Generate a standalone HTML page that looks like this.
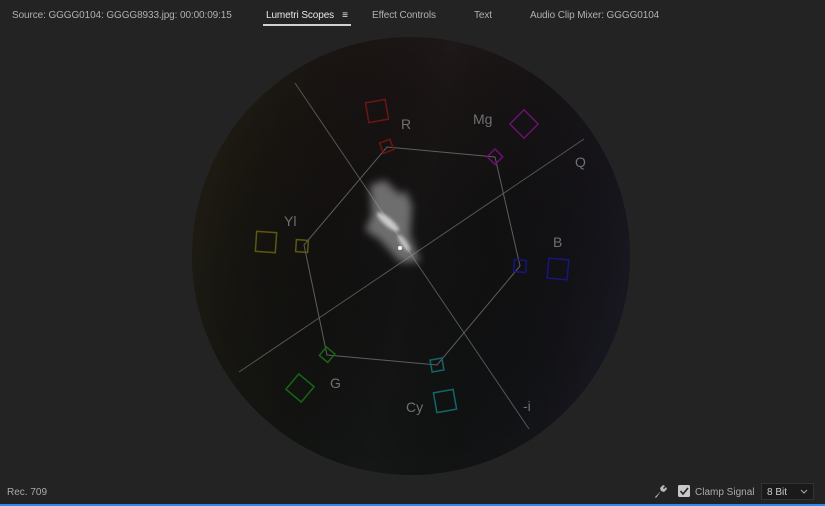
<!DOCTYPE html>
<html><head><meta charset="utf-8"><style>
html,body{margin:0;padding:0;width:825px;height:506px;background:#232323;overflow:hidden;font-family:"Liberation Sans",sans-serif;}
.top{position:absolute;left:0;top:0;width:825px;height:30px;font-size:10px;color:#b0b0b0;}
.top span{position:absolute;top:10px;white-space:nowrap;letter-spacing:-0.1px}
.ul{position:absolute;left:263px;top:24px;width:88px;height:2px;background:#d0d0d0}
.bot{position:absolute;top:487px;font-size:10px;color:#aaa;white-space:nowrap}
.blue{position:absolute;left:0;top:504px;width:825px;height:2px;background:#2d8ceb}
</style></head><body>
<div class="top">
<span style="left:12px">Source: GGGG0104: GGGG8933.jpg: 00:00:09:15</span>
<span style="left:266px;color:#e8e8e8">Lumetri Scopes &nbsp;&nbsp;≡</span>
<span style="left:372px">Effect Controls</span>
<span style="left:474px">Text</span>
<span style="left:530px">Audio Clip Mixer: GGGG0104</span>
</div>
<div class="ul"></div>
<svg width="825" height="506" style="position:absolute;left:0;top:0">
<defs>
<linearGradient id="h1" x1="0.3" y1="0" x2="0.7" y2="1">
<stop offset="0" stop-color="#211818"/><stop offset="0.5" stop-color="#171616"/><stop offset="1" stop-color="#131715"/>
</linearGradient>
<linearGradient id="h2" x1="0" y1="0.4" x2="1" y2="0.6">
<stop offset="0" stop-color="#1e1d10" stop-opacity="0.7"/><stop offset="0.5" stop-color="#000" stop-opacity="0"/><stop offset="1" stop-color="#1a1826" stop-opacity="0.7"/>
</linearGradient>
<radialGradient id="dk" cx="411" cy="256" r="219" gradientUnits="userSpaceOnUse">
<stop offset="0" stop-color="#0f0f0f" stop-opacity="0.4"/><stop offset="1" stop-color="#000" stop-opacity="0"/>
</radialGradient>
<filter id="bl"><feGaussianBlur stdDeviation="4"/></filter>
<filter id="bl2"><feGaussianBlur stdDeviation="1.5"/></filter>
</defs>
<circle cx="411" cy="256" r="219" fill="url(#h1)"/>
<circle cx="411" cy="256" r="219" fill="url(#h2)"/>
<circle cx="411" cy="256" r="219" fill="url(#dk)"/>
<g stroke="#555" stroke-width="1" fill="none">
<line x1="239" y1="372" x2="584" y2="139"/>
<line x1="295" y1="83" x2="529" y2="429"/>
<polygon points="387,147 495,157 520,266 437,365 327,355 304,245" stroke="#5e5e5e"/>
</g>
<g filter="url(#bl)" fill="#aaa">
<path d="M370 185 L385 180 L400 195 L405 190 L412 205 L410 235 L420 262 L400 262 L380 240 L365 230 L372 215 Z" opacity="0.6"/>
</g>
<g filter="url(#bl2)" fill="#ddd">
<ellipse cx="388" cy="222" rx="14" ry="4" transform="rotate(40 388 222)" opacity="0.8"/>
<ellipse cx="404" cy="243" rx="10" ry="3" transform="rotate(55 404 243)" opacity="0.7"/>
</g>
<circle cx="400" cy="248" r="2" fill="#fff"/>
<g fill="none" stroke-width="1.5">
<rect x="367" y="101" width="20" height="20" stroke="#6e1414" transform="rotate(-10 377 111)"/>
<rect x="381" y="141" width="11" height="11" stroke="#6e1414" transform="rotate(-20 386 146)"/>
<rect x="514" y="114" width="20" height="20" stroke="#6a1070" transform="rotate(45 524 124)"/>
<rect x="490" y="151" width="11" height="11" stroke="#6a1070" transform="rotate(45 495 156)"/>
<rect x="548" y="259" width="20" height="20" stroke="#16167e" transform="rotate(5 558 269)"/>
<rect x="514" y="260" width="12" height="12" stroke="#16167e" transform="rotate(5 520 266)"/>
<rect x="256" y="232" width="20" height="20" stroke="#5a5a0e" transform="rotate(4 266 242)"/>
<rect x="296" y="240" width="12" height="12" stroke="#5a5a0e" transform="rotate(4 302 246)"/>
<rect x="290" y="378" width="20" height="20" stroke="#156615" transform="rotate(40 300 388)"/>
<rect x="322" y="349" width="11" height="11" stroke="#156615" transform="rotate(40 327 354)"/>
<rect x="435" y="391" width="20" height="20" stroke="#126666" transform="rotate(-10 445 401)"/>
<rect x="431" y="359" width="12" height="12" stroke="#126666" transform="rotate(-10 437 365)"/>
</g>
<g fill="#707070" font-family="Liberation Sans,sans-serif" font-size="14">
<text x="401" y="129">R</text><text x="473" y="124">Mg</text><text x="575" y="167">Q</text>
<text x="553" y="247">B</text><text x="284" y="226">Yl</text><text x="330" y="388">G</text>
<text x="406" y="412">Cy</text><text x="523" y="411">-i</text>
</g>
<g transform="translate(654,485)" fill="#bbb"><path d="M1 12 L7 6 L6 3 L9 0 L11 1 L9 3 L10 4 L12 2 L13 4 L10 7 L7 6 L2 13 Z"/></g>
<rect x="678" y="485" width="12" height="12" rx="1.5" fill="#c8c8c8"/>
<path d="M680.5 491 L683 494 L688 488" stroke="#232323" stroke-width="1.6" fill="none"/>
<rect x="761.5" y="483.5" width="52" height="16" fill="#1a1a1a" stroke="#333"/>
<path d="M801 490 L804 493 L807 490" stroke="#aaa" fill="none"/>
</svg>
<div class="bot" style="left:7px">Rec. 709</div>
<div class="bot" style="left:695px">Clamp Signal</div>
<div class="bot" style="left:767px;color:#ccc">8 Bit</div>
<div class="blue"></div>
</body></html>
